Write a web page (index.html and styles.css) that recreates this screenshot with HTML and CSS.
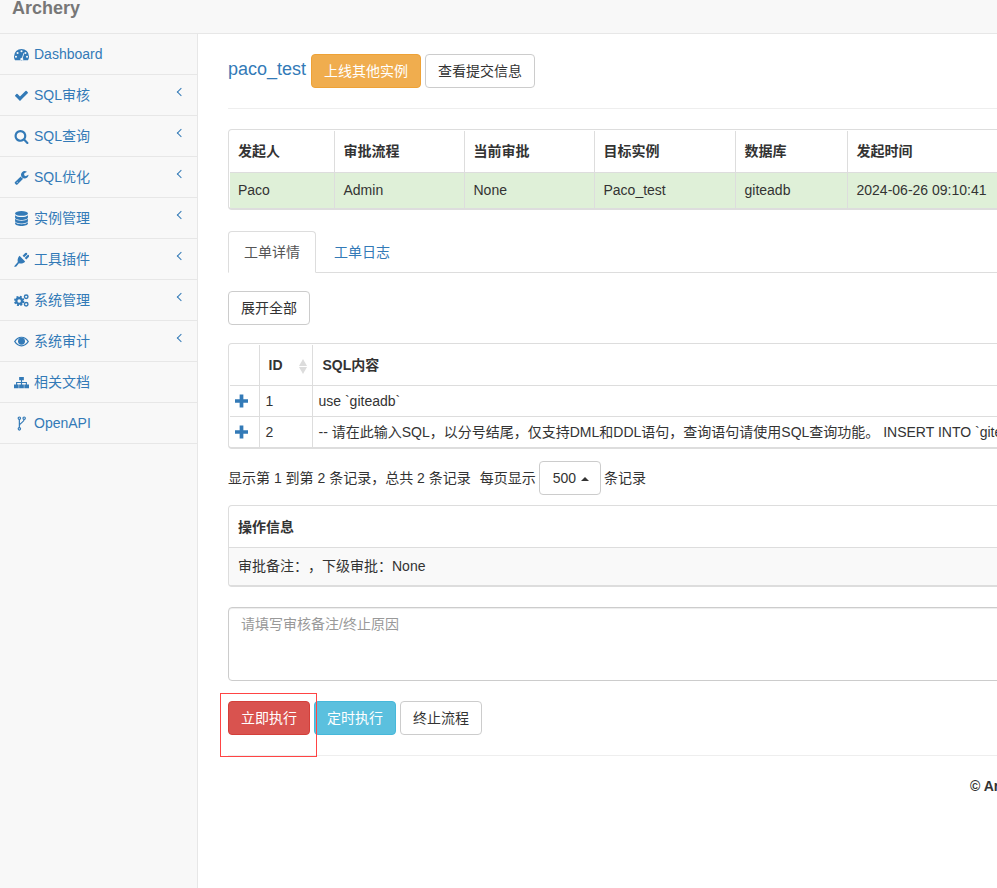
FILE: index.html
```html
<!DOCTYPE html>
<html lang="zh-CN">
<head>
    <meta charset="UTF-8">
    <meta name="viewport" content="width=device-width, initial-scale=1.0">
    <title>Archery</title>
    <link rel="stylesheet" href="styles.css">
</head>
<body>
    <div class="wrapper">
        <nav class="navbar"><a class="brand" href="#">Archery</a></nav>

        <div class="main">
            <ul class="sidebar">
                <li><a href="#">
                    <svg class="icon" viewBox="0 0 16 14"><path fill-rule="evenodd" d="M8 1a8 8 0 0 0-8 8c0 1.700.4 3 1.200 4h13.600c.8-1 1.200-2.300 1.200-4a8 8 0 0 0-8-8zM8 2.500a1.100 1.100 0 1 1 0 2.200 1.100 1.100 0 0 1 0-2.200zM3.800 4.300a1.100 1.100 0 1 1 0 2.200 1.100 1.100 0 0 1 0-2.200zM12.200 4.300a1.100 1.100 0 1 1 0 2.200 1.100 1.100 0 0 1 0-2.200zM2.100 8.300a1.100 1.100 0 1 1 0 2.200 1.100 1.100 0 0 1 0-2.200zM13.900 8.300a1.100 1.100 0 1 1 0 2.200 1.100 1.100 0 0 1 0-2.200zM10.200 5.300l.8.300-1.700 5a1.600 1.600 0 1 1-2.600 1.500 1.600 1.600 0 0 1 1.800-1.700z"/></svg>
                    <span>Dashboard</span></a></li>
                <li><a href="#">
                    <svg class="icon" viewBox="0 0 1792 1792"><path d="M1671 566q0 40-28 68l-724 724-136 136q-28 28-68 28t-68-28l-136-136-362-362q-28-28-28-68t28-68l136-136q28-28 68-28t68 28l294 295 656-657q28-28 68-28t68 28l136 136q28 28 28 68z"/></svg>
                    <span>SQL审核</span><i class="chevron"></i></a></li>
                <li><a href="#">
                    <svg class="icon" viewBox="0 0 1792 1792"><path d="M1216 832q0-185-131.500-316.500t-316.500-131.500-316.500 131.500-131.500 316.500 131.500 316.500 316.500 131.500 316.500-131.500 131.500-316.500zm512 832q0 52-38 90t-90 38q-54 0-90-38l-343-342q-179 124-399 124-143 0-273.500-55.500t-225-150-150-225-55.500-273.500 55.500-273.500 150-225 225-150 273.500-55.500 273.500 55.500 225 150 150 225 55.500 273.500q0 220-124 399l343 343q37 37 37 90z"/></svg>
                    <span>SQL查询</span><i class="chevron"></i></a></li>
                <li><a href="#">
                    <svg class="icon" viewBox="0 0 1792 1792"><path d="M448 1472q0-26-19-45t-45-19-45 19-19 45 19 45 45 19 45-19 19-45zm644-420l-682 682q-37 37-90 37-52 0-91-37l-106-108q-38-36-38-90 0-53 38-91l681-681q39 98 114.500 173.500t173.500 114.500zm634-435q0 39-23 106-47 134-164.500 217.500t-258.500 83.500q-185 0-316.500-131.500t-131.500-316.500 131.500-316.500 316.500-131.500q58 0 121.500 16.500t107.500 46.500q16 11 16 28t-16 28l-293 169v224l193 107q5-3 79-48.500t135.500-81 70.500-35.500q15 0 23.500 10t8.500 25z"/></svg>
                    <span>SQL优化</span><i class="chevron"></i></a></li>
                <li><a href="#">
                    <svg class="icon" viewBox="0 0 14 14"><ellipse cx="7" cy="2.300" rx="6" ry="2.200"/><path d="M1 3.900c1 1.200 3.300 1.800 6 1.800s5-.6 6-1.800v2.100c0 1.300-2.700 2.300-6 2.300s-6-1-6-2.300zM1 7.300c1 1.200 3.300 1.800 6 1.800s5-.6 6-1.800v2.100c0 1.300-2.700 2.300-6 2.300s-6-1-6-2.300zM1 10.600c1 1.200 3.300 1.800 6 1.800s5-.6 6-1.800v1.100c0 1.300-2.700 2.300-6 2.300s-6-1-6-2.300z"/></svg>
                    <span>实例管理</span><i class="chevron"></i></a></li>
                <li><a href="#">
                    <svg class="icon" viewBox="0 0 14 14"><path d="M5.200 3.600l5.200 5.200c-1.400 1.800-3.800 2.400-5.800 1.600L2.200 13.600.4 14v-1l3.200-3.600C3 8 3.500 5 5.200 3.600zM8 3.500L10.500 1a1 1 0 0 1 1.500 1.500L9.500 5zM10 5.500L12.500 3a1 1 0 0 1 1.500 1.500L11.500 7z"/></svg>
                    <span>工具插件</span><i class="chevron"></i></a></li>
                <li><a href="#">
                    <svg class="icon" viewBox="0 0 16 14"><circle class="cog" cx="5.500" cy="7.500" r="4.300" stroke-width="2.400" stroke-dasharray="2 1.400"/><circle class="hub" cx="5.500" cy="7.500" r="3" stroke-width="2.300"/><circle class="hub" cx="13" cy="3" r="1.900" stroke-width="1.500"/><circle class="hub" cx="13" cy="11" r="1.900" stroke-width="1.500"/></svg>
                    <span>系统管理</span><i class="chevron"></i></a></li>
                <li><a href="#">
                    <svg class="icon" viewBox="0 0 16 14"><path fill-rule="evenodd" d="M8 1.800c3.300 0 6.200 2 8 5.200-1.800 3.200-4.700 5.200-8 5.200S1.800 10.200 0 7c1.800-3.200 4.700-5.200 8-5.200zM8 3c-2.500 0-4.800 1.500-6.400 4 1.600 2.500 3.900 4 6.400 4s4.800-1.500 6.400-4C12.800 4.500 10.500 3 8 3z"/><circle cx="8" cy="6.800" r="3.700"/></svg>
                    <span>系统审计</span><i class="chevron"></i></a></li>
                <li><a href="#">
                    <svg class="icon" viewBox="0 0 16 14"><path d="M5.500 1h5v3.600H8.600V6.500h5.200v2.700H16V13h-5V9.200h1.600V7.600H8.600v1.600H10.500V13h-5V9.200h1.900V7.600H3.400v1.600H5V13H0V9.200h2.200V6.500h5.200V4.600H5.500z"/></svg>
                    <span>相关文档</span></a></li>
                <li><a href="#">
                    <svg class="icon" viewBox="0 0 14 14"><g class="fork"><circle cx="5" cy="2" r="1.100"/><circle cx="5" cy="12" r="1.100"/><circle cx="9.500" cy="2" r="1.100"/><path d="M5 3.100v7.800M9.500 3.100c0 3.400-4.500 2.900-4.500 5.900"/></g></svg>
                    <span>OpenAPI</span></a></li>
            </ul>

            <div class="content">
                <div class="title-row">
                    <a class="workflow-name" href="#">paco_test</a>
                    <button class="btn btn-warning">上线其他实例</button>
                    <button class="btn btn-default">查看提交信息</button>
                </div>
                <hr class="line">

                <div class="table-box info-box">
                    <table class="data-table">
                        <colgroup>
                            <col class="c-105"><col class="c-130"><col class="c-130"><col class="c-141"><col class="c-112"><col class="c-rest">
                        </colgroup>
                        <thead>
                            <tr><th>发起人</th><th>审批流程</th><th>当前审批</th><th>目标实例</th><th>数据库</th><th>发起时间</th></tr>
                        </thead>
                        <tbody>
                            <tr class="success"><td>Paco</td><td>Admin</td><td>None</td><td>Paco_test</td><td>giteadb</td><td>2024-06-26 09:10:41</td></tr>
                        </tbody>
                    </table>
                </div>

                <ul class="tabs">
                    <li class="active"><a href="#">工单详情</a></li>
                    <li><a href="#">工单日志</a></li>
                </ul>

                <button class="btn btn-default expand-btn">展开全部</button>

                <div class="table-box detail-box">
                    <table class="data-table">
                        <colgroup>
                            <col class="c-30"><col class="c-53"><col class="c-rest">
                        </colgroup>
                        <thead>
                            <tr>
                                <th></th>
                                <th class="id-head">ID<span class="sort"><i class="up"></i><i class="down"></i></span></th>
                                <th class="sql-head">SQL内容</th>
                            </tr>
                        </thead>
                        <tbody>
                            <tr>
                                <td class="plus-cell"><svg class="plus" viewBox="0 0 14 14"><path d="M5 0h4v5h5v4H9v5H5V9H0V5h5z"/></svg></td>
                                <td>1</td>
                                <td>use `giteadb`</td>
                            </tr>
                            <tr>
                                <td class="plus-cell"><svg class="plus" viewBox="0 0 14 14"><path d="M5 0h4v5h5v4H9v5H5V9H0V5h5z"/></svg></td>
                                <td>2</td>
                                <td>-- 请在此输入SQL，以分号结尾，仅支持DML和DDL语句，查询语句请使用SQL查询功能。 INSERT INTO `giteadb`.`users` VALUES</td>
                            </tr>
                        </tbody>
                    </table>
                </div>

                <div class="pager">
                    <span class="pager-info">显示第 1 到第 2 条记录，总共 2 条记录</span>
                    <span class="pager-size">每页显示</span>
                    <button class="btn btn-default size-btn">500<i class="caret"></i></button>
                    <span>条记录</span>
                </div>

                <div class="panel">
                    <div class="panel-heading">操作信息</div>
                    <div class="panel-body">审批备注：，下级审批：None</div>
                </div>

                <textarea class="remark" placeholder="请填写审核备注/终止原因"></textarea>

                <div class="action-bar">
                    <button class="btn btn-danger">立即执行</button>
                    <button class="btn btn-info">定时执行</button>
                    <button class="btn btn-default">终止流程</button>
                    <div class="mark-box"></div>
                </div>
                <hr class="line foot-line">

                <footer class="footer"><strong>© Archery 2024</strong></footer>
            </div>
        </div>
    </div>
</body>
</html>
```

FILE: styles.css
```css
* {
    box-sizing: border-box;
}

html, body {
    height: 100%;
}

body {
    margin: 0;
    overflow: hidden;
    font-family: "Liberation Sans", "Noto Sans CJK SC", Arial, sans-serif;
    font-size: 14px;
    line-height: 20px;
    color: #333;
    background: #fff;
    text-spacing-trim: space-all;
}

a {
    color: #337ab7;
    text-decoration: none;
}

/* page is photographed scrolled down a little */
.wrapper {
    margin-top: -17px;
    width: 1600px;
}

.navbar {
    height: 51px;
    background: #f8f8f8;
    border-bottom: 1px solid #e7e7e7;
    padding: 15px 12px;
}

.brand {
    font-size: 18px;
    font-weight: bold;
    color: #777;
}

.main {
    display: flex;
    align-items: stretch;
    min-height: 854px;
}

.sidebar {
    flex: none;
    width: 198px;
    margin: 0;
    padding: 0;
    list-style: none;
    background: #f8f8f8;
    border-right: 1px solid #e7e7e7;
}

.sidebar li {
    border-bottom: 1px solid #e7e7e7;
}

.sidebar a {
    display: flex;
    align-items: center;
    height: 40px;
    padding: 0 14px;
    position: relative;
}

.icon {
    width: 15px;
    height: 15px;
    margin-right: 5px;
    flex: none;
    fill: #337ab7;
}

.cog, .hub {
    fill: none;
    stroke: #337ab7;
}

.fork {
    fill: none;
    stroke: #337ab7;
    stroke-width: 1.100;
}

.chevron {
    position: absolute;
    right: 13px;
    top: 14px;
    width: 6px;
    height: 6px;
    border-left: 1px solid #337ab7;
    border-bottom: 1px solid #337ab7;
    transform: rotate(45deg);
}

.content {
    flex: none;
    width: 1402px;
    padding: 20px 30px 0;
}

.title-row {
    display: flex;
    align-items: center;
    gap: 4px;
}

.workflow-name {
    font-size: 18px;
    margin-right: 1px;
    position: relative;
    top: -2px;
}

.btn {
    display: inline-block;
    height: 34px;
    padding: 6px 12px;
    font-family: inherit;
    font-size: 14px;
    line-height: 20px;
    border: 1px solid #ccc;
    border-radius: 4px;
    white-space: nowrap;
    background: #fff;
    color: #333;
}

.btn-warning {
    background: #f0ad4e;
    border-color: #eea236;
    color: #fff;
}

.btn-danger {
    background: #d9534f;
    border-color: #d43f3a;
    color: #fff;
}

.btn-info {
    background: #5bc0de;
    border-color: #46b8da;
    color: #fff;
}

.line {
    margin: 20px 0;
    border: 0;
    border-top: 1px solid #eee;
}

.table-box {
    border: 1px solid #ddd;
    border-bottom-width: 2px;
    border-radius: 4px;
    padding: 1px 0 0 1px;
}

.data-table {
    width: 100%;
    table-layout: fixed;
    border-collapse: collapse;
}

.data-table th, .data-table td {
    text-align: left;
    white-space: nowrap;
    overflow: hidden;
    border-left: 1px solid #ddd;
    border-bottom: 1px solid #ddd;
}

.data-table th:first-child, .data-table td:first-child {
    border-left: 0;
}

.data-table tbody tr:last-child td {
    border-bottom: 0;
}

.info-box th {
    height: 41px;
    padding: 0 8px 0 9px;
}

.info-box td {
    height: 36px;
    padding: 0 8px 0 9px;
}

.info-box th:first-child, .info-box td:first-child {
    padding-left: 8px;
}

.success td {
    background: #dff0d8;
}

.c-105 { width: 104px; }
.c-130 { width: 130px; }
.c-141 { width: 141px; }
.c-112 { width: 112px; }
.c-30 { width: 29px; }
.c-53 { width: 53px; }

.tabs {
    display: flex;
    margin: 21px 0 18px;
    padding: 0;
    list-style: none;
    border-bottom: 1px solid #ddd;
    height: 42px;
}

.tabs li a {
    display: block;
    height: 42px;
    padding: 10px 15px;
    border: 1px solid transparent;
    margin-right: 2px;
    border-radius: 4px 4px 0 0;
}

.tabs li.active a {
    color: #555;
    background: #fff;
    border-color: #ddd #ddd #fff;
}

.detail-box {
    margin-top: 18px;
}

.detail-box th {
    height: 40px;
    padding: 0 8px;
}

.detail-box td {
    height: 31px;
    padding: 0 6px;
}

.expand-btn {
    display: block;
}

.id-head {
    position: relative;
    padding-left: 9px !important;
}

.sql-head {
    padding-left: 10px !important;
}

.sort {
    position: absolute;
    right: 5px;
    top: 14px;
    width: 8px;
}

.sort i {
    display: block;
    width: 0;
    height: 0;
    border-left: 4px solid transparent;
    border-right: 4px solid transparent;
}

.sort .up {
    border-bottom: 7px solid #dcdcdc;
    margin-bottom: 1px;
}

.sort .down {
    border-top: 7px solid #dcdcdc;
}

.plus-cell {
    padding: 0 !important;
}

.plus {
    display: block;
    width: 13px;
    height: 14px;
    margin: 0 0 0 5px;
    fill: #337ab7;
}

.pager {
    display: flex;
    align-items: center;
    margin-top: 11px;
    height: 36px;
}

.pager-info {
    margin-right: 9px;
}

.pager-size {
    margin-right: 3px;
}

.size-btn {
    margin-right: 3px;
    padding-left: 13px;
    padding-right: 11px;
}

.caret {
    display: inline-block;
    width: 0;
    height: 0;
    margin-left: 5px;
    vertical-align: middle;
    border-left: 4px solid transparent;
    border-right: 4px solid transparent;
    border-bottom: 4px solid #333;
}

.panel {
    margin-top: 9px;
    border: 1px solid #ddd;
    border-bottom-width: 2px;
    border-radius: 4px;
    overflow: hidden;
}

.panel-heading {
    height: 42px;
    padding: 11px 9px;
    font-weight: bold;
    border-bottom: 1px solid #ddd;
}

.panel-body {
    height: 37px;
    padding: 8px 9px;
    background: #f9f9f9;
}

.remark {
    display: block;
    width: 100%;
    height: 74px;
    margin-top: 20px;
    padding: 6px 12px;
    font-family: inherit;
    font-size: 14px;
    line-height: 20px;
    color: #555;
    border: 1px solid #ccc;
    border-radius: 4px;
    box-shadow: inset 0 1px 1px rgba(0, 0, 0, 0.075);
    resize: none;
    outline: none;
}

.remark::placeholder {
    color: #999;
}

.action-bar {
    display: flex;
    gap: 4px;
    margin-top: 20px;
    position: relative;
}

/* red box drawn on the screenshot */
.mark-box {
    position: absolute;
    left: -8px;
    top: -8px;
    width: 97px;
    height: 64px;
    border: 1px solid #f44;
}

.foot-line {
    margin-bottom: 0;
}

.footer {
    padding: 20px 0 0 742px;
}
```
